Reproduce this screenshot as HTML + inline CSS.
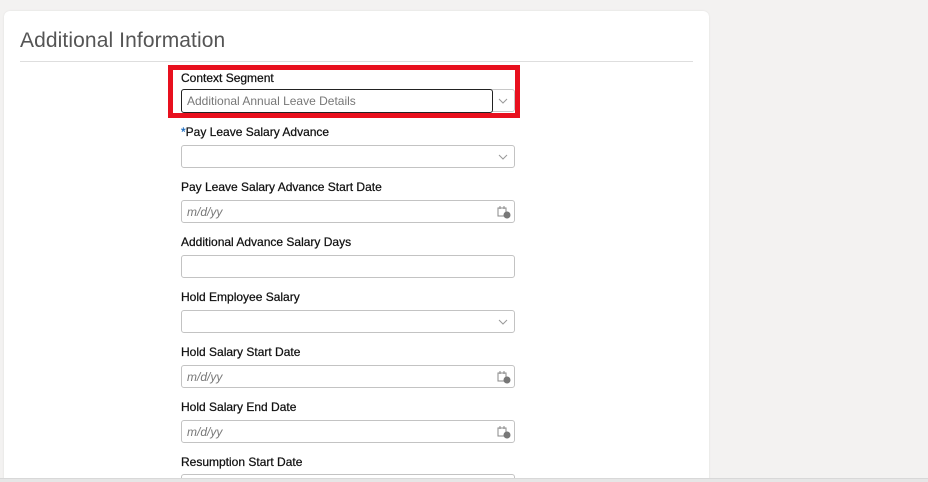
<!DOCTYPE html>
<html style="width:928px;height:482px;overflow:hidden"><head><meta charset="utf-8"><style>
*{box-sizing:border-box;margin:0;padding:0}
body{width:928px;height:482px;overflow:hidden;background:#f3f2f1;font-family:"Liberation Sans",sans-serif;position:relative}
.card{position:absolute;left:4px;top:11px;width:705px;height:471px;background:#fff;border-radius:6px 6px 0 0;box-shadow:0 0 2px rgba(0,0,0,.08)}
h1{position:absolute;left:20px;top:29px;font-size:21px;font-weight:normal;color:#555;letter-spacing:.1px}
.div{position:absolute;left:20px;top:61px;width:673px;height:1px;background:#dedede}
.lbl{position:absolute;left:181px;font-size:12px;color:#111;-webkit-text-stroke:.25px #111}
.in{position:absolute;left:181px;width:334px;height:23px;border:1px solid #c3c3c3;border-radius:3px;background:#fff}
.ph{position:absolute;left:5px;top:4px;font-size:12px;font-style:italic;color:#777}
.chev{position:absolute;right:6px;top:7px}
.cal{position:absolute;right:3px;top:4px}
.red{position:absolute;left:168px;top:65px;width:352px;height:53px;border:5px solid #e8101e}
.strip{position:absolute;left:0;top:478px;width:928px;height:4px;background:#e6e6e6;border-top:1px solid #d8d8d8}
</style></head><body>
<div class="card"></div>
<h1>Additional Information</h1>
<div class="div"></div>

<div class="lbl" style="top:71px">Context Segment</div>
<div class="in" style="top:89px;width:334px;border-color:#c8c8c8"><svg class="chev" width="10" height="8" viewBox="0 0 10 8"><path d="M1 2l4 4 4-4" fill="none" stroke="#999" stroke-width="1"/></svg></div>
<div style="position:absolute;left:181px;top:89px;width:312px;height:24px;border:1.5px solid #222;border-radius:3px;background:#fff;font-size:12px;color:#777;padding:4px 0 0 5px">Additional Annual Leave Details</div>
<div class="red"></div>

<div class="lbl" style="top:125px"><span style="color:#1b6bbf;-webkit-text-stroke:.25px #1b6bbf">*</span>Pay Leave Salary Advance</div>
<div class="in" style="top:145px"><svg class="chev" width="10" height="8" viewBox="0 0 10 8"><path d="M1 2l4 4 4-4" fill="none" stroke="#999" stroke-width="1"/></svg></div>

<div class="lbl" style="top:180px">Pay Leave Salary Advance Start Date</div>
<div class="in" style="top:200px"><span class="ph">m/d/yy</span><svg class="cal" width="14" height="14" viewBox="0 0 14 14"><rect x="1" y="3" width="8" height="8" fill="none" stroke="#888"/><path d="M3 1v3M7 1v3" stroke="#888"/><circle cx="10" cy="10" r="3.5" fill="#777"/></svg></div>

<div class="lbl" style="top:235px">Additional Advance Salary Days</div>
<div class="in" style="top:255px"></div>

<div class="lbl" style="top:290px">Hold Employee Salary</div>
<div class="in" style="top:310px"><svg class="chev" width="10" height="8" viewBox="0 0 10 8"><path d="M1 2l4 4 4-4" fill="none" stroke="#999" stroke-width="1"/></svg></div>

<div class="lbl" style="top:345px">Hold Salary Start Date</div>
<div class="in" style="top:365px"><span class="ph">m/d/yy</span><svg class="cal" width="14" height="14" viewBox="0 0 14 14"><rect x="1" y="3" width="8" height="8" fill="none" stroke="#888"/><path d="M3 1v3M7 1v3" stroke="#888"/><circle cx="10" cy="10" r="3.5" fill="#777"/></svg></div>

<div class="lbl" style="top:400px">Hold Salary End Date</div>
<div class="in" style="top:420px"><span class="ph">m/d/yy</span><svg class="cal" width="14" height="14" viewBox="0 0 14 14"><rect x="1" y="3" width="8" height="8" fill="none" stroke="#888"/><path d="M3 1v3M7 1v3" stroke="#888"/><circle cx="10" cy="10" r="3.5" fill="#777"/></svg></div>

<div class="lbl" style="top:455px">Resumption Start Date</div>
<div class="in" style="top:474px;height:8px;border-bottom:none;border-radius:3px 3px 0 0"></div>
<div class="strip"></div>
</body></html>
